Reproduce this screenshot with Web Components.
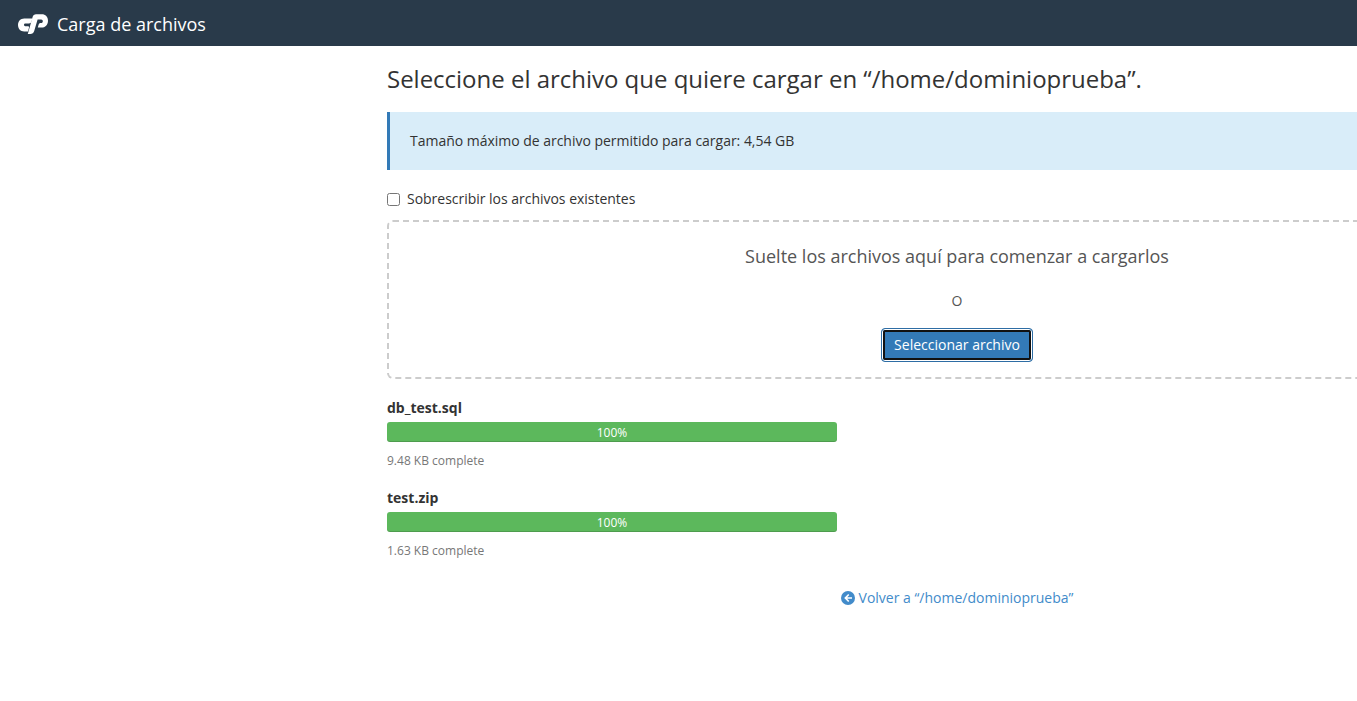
<!DOCTYPE html>
<html lang="es">
<head>
<meta charset="utf-8">
<title>Carga de archivos</title>
<style>
  html, body { margin: 0; height: 100%; overflow: hidden; background: #fff; }
  body { font-family: "Open Sans", sans-serif; font-size: 14px; color: #333; }
</style>
</head>
<body>
<top-bar>Carga de archivos</top-bar>
<upload-page>
  <page-title>Seleccione el archivo que quiere cargar en “/home/dominioprueba”.</page-title>
  <info-box>Tamaño máximo de archivo permitido para cargar: 4,54 GB</info-box>
  <check-row>Sobrescribir los archivos existentes</check-row>
  <drop-zone></drop-zone>
  <upload-item name="db_test.sql" size="9.48 KB complete"></upload-item>
  <upload-item name="test.zip" size="1.63 KB complete"></upload-item>
  <back-link>Volver a “/home/dominioprueba”</back-link>
</upload-page>

<script>
//small helper so every element is set up the same way
class ShadowBase extends HTMLElement {
  constructor(html) {
    super();
    this.attachShadow({ mode: "open" }).innerHTML = html;
  }
}

class TopBar extends ShadowBase {
  constructor() {
    super(`
      <style>
        :host { display: flex; align-items: center; height: 46px; background: #293a4a; color: #fff; padding-left: 18px; }
        svg { width: 30px; height: 20px; margin: 1px 9px 0 0; }
        .name { font-size: 18px; position: relative; top: 1px; }
      </style>
      <svg viewBox="0 0 30 20" fill="#fff">
        <path d="M6.2 4.4H14.4L13.6 7.4C13.2 8.6 12.2 9.4 10.9 9.4H7.2C6.5 9.4 6 10 6 10.8C6 11.6 6.5 12.2 7.2 12.2H9.9C10.8 12.2 11.2 12.8 11 13.6L10 17.4H6.2C2.6 17.4 0 14.6 0 10.9C0 7.2 2.6 4.4 6.2 4.4Z"/>
        <path d="M9.8 20L14.6 3C15.1 1.2 16.4 .3 18 .3H23.8C27.5 .3 30 3 30 6.7C30 10.7 27.2 13.6 23.4 13.6H19.8L20.6 10.7C20.9 9.6 21.7 9 22.7 9H23.2C24.2 9 24.8 8.1 24.8 7.2C24.8 6.2 24.2 5.4 23.2 5.4H19.6L16.2 17C15.7 18.9 14.2 20 12.4 20Z"/>
      </svg>
      <span class="name"><slot></slot></span>`);
  }
}

class UploadPage extends ShadowBase {
  constructor() {
    super(`
      <style>
        :host { display: block; width: 1140px; margin-left: 387px; }
      </style>
      <slot></slot>`);
  }
}

class PageTitle extends ShadowBase {
  constructor() {
    super(`
      <style>
        :host { display: block; font-size: 24px; line-height: 32px; letter-spacing: -.015px; color: #333; padding-top: 17px; margin-bottom: 17px; }
      </style>
      <slot></slot>`);
  }
}

class InfoBox extends ShadowBase {
  constructor() {
    super(`
      <style>
        :host { display: block; box-sizing: border-box; height: 58px; line-height: 58px; padding-left: 20px; letter-spacing: -.02px; background: #d9edf9; border-left: 3px solid #337ab7; color: #333; }
      </style>
      <slot></slot>`);
  }
}

class CheckRow extends ShadowBase {
  constructor() {
    super(`
      <style>
        :host { display: flex; align-items: center; height: 20px; margin-top: 18px; margin-bottom: 12px; letter-spacing: -.02px; }
        input { width: 13px; height: 13px; margin: 3px 7px 0 0; }
      </style>
      <input type="checkbox"><slot></slot>`);
  }
}

class DropZone extends ShadowBase {
  constructor() {
    super(`
      <style>
        :host { display: flex; flex-direction: column; align-items: center; box-sizing: border-box; height: 159px; border: 2px dashed #ccc; border-radius: 6px; padding-top: 20px; color: #555; }
        .hint { font-size: 18px; line-height: 28px; }
        .or { line-height: 20px; margin-top: 21px; }
        button {
          margin-top: 17px; height: 34px; padding: 0 12px 2px; font: 14px "Open Sans", sans-serif; color: #fff;
          background: #337ab7; border: 1px solid #2e6da4; border-radius: 4px;
          outline: 2px solid #111; outline-offset: -4px; box-shadow: inset 0 0 0 1px #fff;
        }
      </style>
      <div class="hint">Suelte los archivos aquí para comenzar a cargarlos</div>
      <div class="or">O</div>
      <button type="button">Seleccionar archivo</button>`);
  }
}

class UploadItem extends ShadowBase {
  constructor() {
    super(`
      <style>
        :host { display: block; width: 450px; height: 90px; }
        .name { font-weight: 700; line-height: 20px; padding-top: 19px; color: #333; }
        .bar { height: 20px; margin-top: 4px; line-height: 22px; font-size: 12px; text-align: center; color: #fff; background: #5cb85c; border-radius: 3px; box-shadow: inset 0 -1px 0 rgba(0,0,0,.15); }
        .size { font-size: 12px; line-height: 18px; margin-top: 10px; color: #777; }
      </style>
      <div class="name"></div>
      <div class="bar">100%</div>
      <div class="size"></div>`);
  }
  connectedCallback() {
    this.shadowRoot.querySelector(".name").textContent = this.getAttribute("name");
    this.shadowRoot.querySelector(".size").textContent = this.getAttribute("size");
  }
}

class BackLink extends ShadowBase {
  constructor() {
    super(`
      <style>
        :host { display: flex; justify-content: center; align-items: center; margin-top: 29px; width: 1140px; color: #428bca; line-height: 20px; }
        svg { width: 14px; height: 14px; margin-right: 4px; }
      </style>
      <svg viewBox="0 0 14 14">
        <circle cx="7" cy="7" r="7" fill="#428bca"/>
        <path d="M7.2 3L3.2 7L7.2 11L8.3 9.9L6.2 7.8H11V6.2H6.2L8.3 4.1Z" fill="#fff"/>
      </svg>
      <slot></slot>`);
  }
}

customElements.define("top-bar", TopBar);
customElements.define("upload-page", UploadPage);
customElements.define("page-title", PageTitle);
customElements.define("info-box", InfoBox);
customElements.define("check-row", CheckRow);
customElements.define("drop-zone", DropZone);
customElements.define("upload-item", UploadItem);
customElements.define("back-link", BackLink);
</script>
</body>
</html>
